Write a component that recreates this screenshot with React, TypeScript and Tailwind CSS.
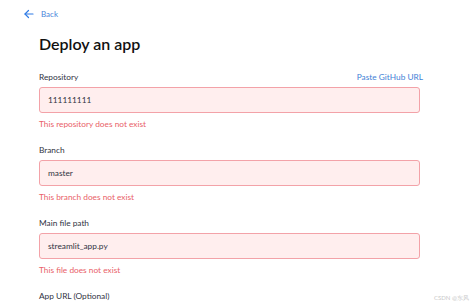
import { ReactNode } from "react";

const fields = [
  { label: "Repository", value: "111111111", error: "This repository does not exist", link: "Paste GitHub URL" },
  { label: "Branch", value: "master", error: "This branch does not exist" },
  { label: "Main file path", value: "streamlit_app.py", error: "This file does not exist" },
];

function Field({
  label,
  value,
  error,
  link,
}: {
  label: string;
  value: string;
  error: string;
  link?: ReactNode;
}) {
  return (
    <div className="mb-[5px]">
      <div className="flex h-[20px] items-center justify-between">
        <span className="text-[8.3px] text-[#31333f]">{label}</span>
        {link && <span className="-mr-[3px] text-[8.3px] text-[#3f7fd6]">{link}</span>}
      </div>
      <div className="flex h-[26px] items-center rounded-[3px] border-[1.5px] border-[#f3a2a8] bg-[#ffeeee] px-[8px] text-[8.3px] text-[#31333f]">
        {value}
      </div>
      <div className="flex h-[22px] items-center text-[8.3px] text-[#e95f69]">{error}</div>
    </div>
  );
}

export default function App() {
  return (
    <div className="relative h-[306px] w-[474px] overflow-hidden bg-white font-['Lato',sans-serif]">
      <div className="flex h-[28px] items-center gap-[6px] pl-[23px]">
        <svg width="12" height="12" viewBox="0 0 24 24" fill="none" stroke="#2f7be5" strokeWidth="2.4" strokeLinecap="round" strokeLinejoin="round">
          <path d="M20 12H4" />
          <path d="M11 5l-7 7 7 7" />
        </svg>
        <span className="text-[8px] text-[#4a85da]">Back</span>
      </div>
      <div className="pl-[39px] pr-[54px]">
        <h1 className="mb-[7px] flex h-[32px] items-center text-[16px] font-semibold text-[#111]">
          Deploy an app
        </h1>
        {fields.map((f) => (
          <Field key={f.label} label={f.label} value={f.value} error={f.error} link={f.link} />
        ))}
        <div className="flex h-[20px] items-center text-[8.3px] text-[#31333f]">App URL (Optional)</div>
      </div>
      <span className="absolute bottom-[4px] right-[5px] text-[6px] text-[#c9c9c9]">CSDN @东风</span>
    </div>
  );
}
